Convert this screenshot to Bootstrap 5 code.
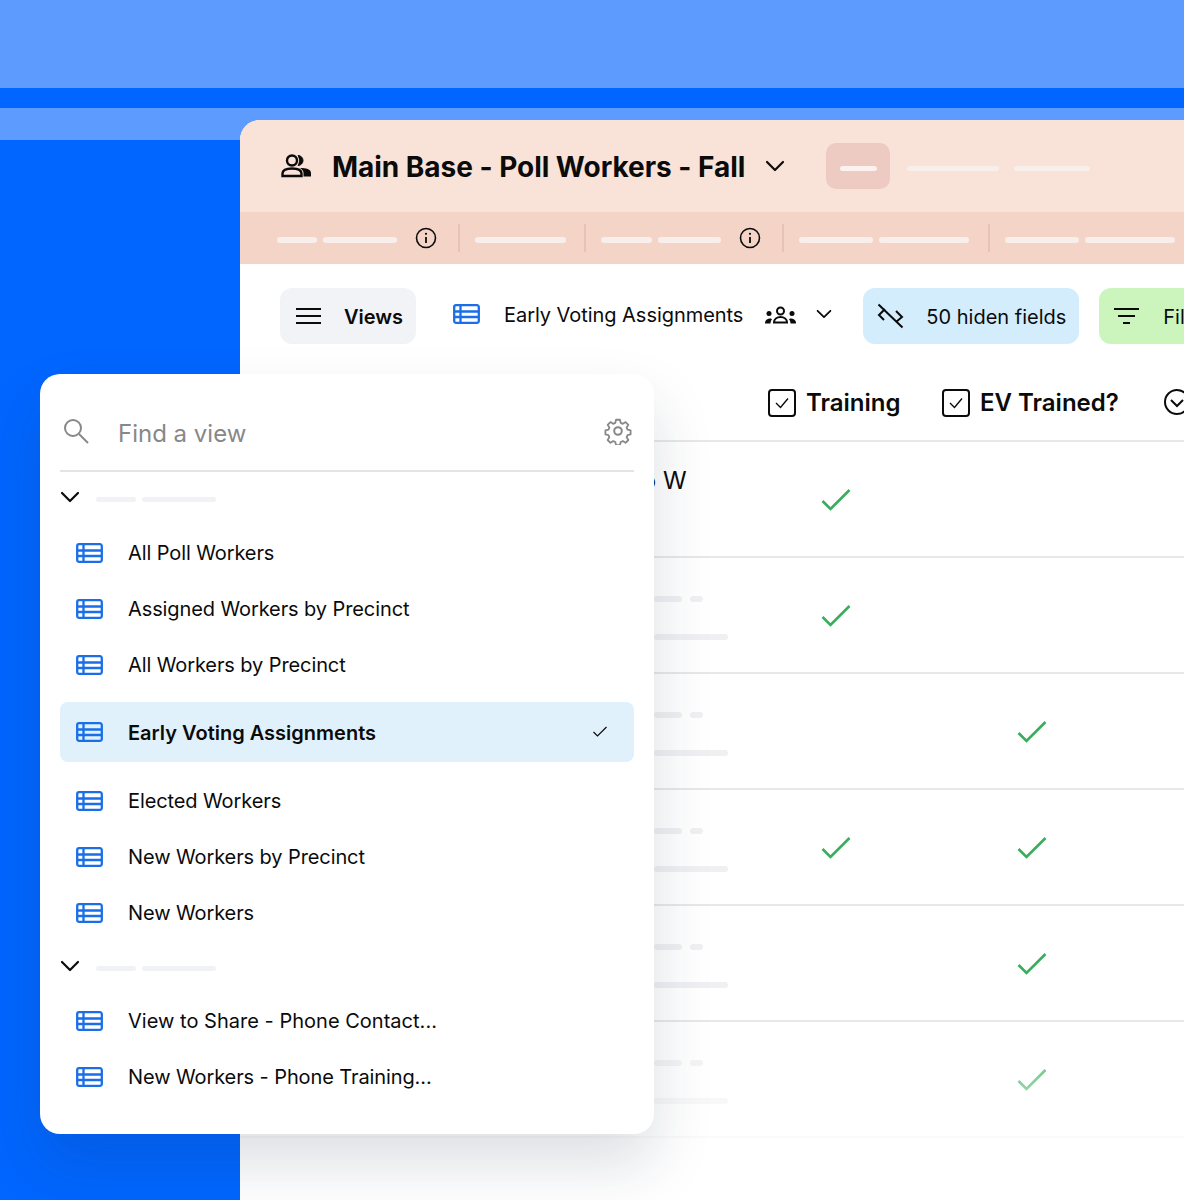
<!DOCTYPE html>
<html lang="en">
<head>
<meta charset="utf-8">
<title>Views</title>
<link rel="stylesheet" href="https://cdn.jsdelivr.net/npm/bootstrap@5.3.0/dist/css/bootstrap.min.css">
<style>
html,body{margin:0;background:#0066ff;}
body{font-family:Inter,"Noto Sans",sans-serif;color:#0b0b0b;}
svg{flex:none;}
.stage{position:relative;width:1184px;height:1200px;overflow:hidden;background:#0066ff;}
.stripe-a{height:88px;background:#5e9bff;}
.stripe-b{height:32px;margin-top:20px;background:#5e9bff;}
.win{position:absolute;left:240px;top:120px;width:1200px;height:1080px;background:#fff;border-top-left-radius:20px;overflow:hidden;}
.win-head{height:92px;background:#f9e3d8;padding-left:41px;}
.win-title{font-size:28px;font-weight:700;line-height:1;margin:0 0 0 20px;white-space:nowrap;letter-spacing:-.03px;position:relative;top:1px;}
.head-chev{margin-left:20px;}
.head-pill{width:64px;height:46px;background:#edcbc2;border-radius:10px;margin-left:41px;}
.sk{display:block;height:6px;border-radius:3px;background:#f8efec;flex:none;}
.sk-h{height:5px;position:relative;top:2px;}
.win-sub{height:52px;background:#f4d4c7;padding-left:37px;}
.win-sub .sk{position:relative;top:2px;}
.sub-sep{width:2px;height:28px;background:#e6c3b6;flex:none;}
.win-tools{padding:24px 0 0 40px;height:56px;box-sizing:content-box;}
.chip{height:56px;border-radius:12px;flex:none;white-space:nowrap;font-size:20px;}
.chip span{position:relative;top:1px;}
.chip-views{width:136px;background:#f1f3f7;padding-left:16px;font-weight:600;}
.chip-views span{margin-left:23px;}
.chip-hide{width:216px;background:#d3edfc;padding-left:14px;margin-left:31px;}
.chip-hide span{margin-left:22px;}
.chip-filter{width:200px;background:#ccf5be;padding-left:15px;margin-left:20px;}
.chip-filter span{margin-left:24px;}
.view-name{font-size:20px;margin-left:24px;line-height:1;white-space:nowrap;position:relative;top:-1px;letter-spacing:-.05px;}
.col-heads{height:98px;padding-top:44px;border-bottom:2px solid #e8e8e8;padding-left:528px;box-sizing:border-box;font-size:24px;font-weight:600;line-height:30px;white-space:nowrap;}
.col-h1{width:174px;flex:none;gap:10px;}
.col-h2{width:221px;flex:none;gap:10px;}
.t-row{height:116px;border-bottom:2px solid #e8e8e8;display:grid;grid-template-columns:498px 196px 196px;}
.t-name{padding-top:24px;padding-left:364px;font-size:24px;line-height:30px;white-space:nowrap;grid-column:1;grid-row:1;}
.t-skel{padding-top:38px;padding-left:414px;grid-column:1;grid-row:1;}
.t-skel .sk{background:#f0f0f3;height:6px;}
.t-c{display:flex;align-items:center;justify-content:center;padding-top:2px;}
.t-cell1{grid-column:2;grid-row:1;}
.t-cell2{grid-column:3;grid-row:1;}
.fade-bottom{position:absolute;left:0;right:0;top:900px;height:140px;background:linear-gradient(to bottom,rgba(255,255,255,0),rgba(255,255,255,.92));pointer-events:none;}
.pop{position:absolute;left:40px;top:374px;width:614px;height:760px;background:#fff;border-radius:20px;padding:0 20px;box-shadow:0 30px 60px rgba(30,40,70,.15);}
.pop-search{height:98px;border-bottom:2px solid #e4e4e4;padding:18px 2px 0 3px;}
.pop-search span{font-size:24px;color:#888;margin-left:29px;position:relative;top:3px;}
.pop-group{height:53px;padding-bottom:3px;}
.pop-group2{height:52px;padding-bottom:2px;}
.pop-group .sk{background:#f1f2f5;height:5px;position:relative;top:2px;}
.pop-group svg{margin-right:16px;}
.pop-item{height:56px;padding-left:16px;font-size:20px;white-space:nowrap;letter-spacing:-.1px;}
.pop-item span{margin-left:25px;}
.pop-wide{letter-spacing:.02px;}
.pop-active{height:60px;margin:9px 0 11px;background:#e0f1fc;border-radius:8px;font-weight:600;padding-right:26px;letter-spacing:0;}
.pop-active span{position:relative;top:1px;}
</style>
</head>
<body>
<svg width="0" height="0" class="d-block" aria-hidden="true">
<defs>
<symbol id="tbl" viewBox="0 0 27 20"><path fill="none" stroke="#1a6fe8" stroke-width="2.300" d="M3 1.200h21a1.800 1.800 0 0 1 1.800 1.800v14a1.800 1.800 0 0 1-1.800 1.800H3A1.800 1.800 0 0 1 1.200 17V3A1.800 1.800 0 0 1 3 1.200zM1 7.500h25M1 13h25M7.500 1v18"/></symbol>
<symbol id="chev" viewBox="0 0 20 12"><path fill="none" stroke="#0b0b0b" stroke-width="2.200" stroke-linecap="round" stroke-linejoin="round" d="M2 2l8 8 8-8"/></symbol>
<symbol id="chk" viewBox="0 0 30 24"><path fill="none" stroke="#38ae5c" stroke-width="2.600" d="M1.500 13l8 8L28.500 2"/></symbol>
<symbol id="box" viewBox="0 0 28 28"><rect x="1" y="1" width="26" height="26" rx="3" fill="none" stroke="#0b0b0b" stroke-width="2"/><path fill="none" stroke="#0b0b0b" stroke-width="1.400" d="M8 14l4.500 4.500L20 9.500"/></symbol>
<symbol id="info" viewBox="0 0 22 22"><circle cx="11" cy="11" r="9.500" fill="none" stroke="#0b0b0b" stroke-width="1.600"/><path d="M11 10v6" stroke="#0b0b0b" stroke-width="1.800"/><circle cx="11" cy="6.800" r="1.100" fill="#0b0b0b"/></symbol>
</defs>
</svg>
<main class="stage">
  <div class="stripe-a"></div>
  <div class="stripe-b"></div>

  <section class="win">
    <header class="win-head d-flex align-items-center">
      <svg width="31" height="24" viewBox="0 0 31 24"><circle cx="11" cy="6.500" r="5" fill="none" stroke="#0b0b0b" stroke-width="2.400"/><path d="M17 1.500a5 5 0 0 1 0 10c2-3 2-7 0-10z" fill="#0b0b0b" stroke="#0b0b0b"/><path fill="none" stroke="#0b0b0b" stroke-width="2.400" d="M1.500 22v-2.500c0-3 3-5 9.500-5s9.500 2 9.500 5V22z"/><path fill="#0b0b0b" d="M19 14c6 0 11 1 11 5v3.500h-7.500V19c0-2-1.500-4-3.500-5z"/></svg>
      <h1 class="win-title">Main Base - Poll Workers - Fall</h1>
      <svg class="head-chev" width="20" height="12"><use href="#chev"/></svg>
      <div class="head-pill d-flex align-items-center justify-content-center"><i class="sk sk-h" style="width:37px;background:#fbf1ee"></i></div>
      <i class="sk sk-h" style="width:92px;margin-left:17px"></i>
      <i class="sk sk-h" style="width:76px;margin-left:15px"></i>
    </header>
    <div class="win-sub d-flex align-items-center">
      <i class="sk" style="width:40px"></i><i class="sk" style="width:74px;margin-left:6px"></i>
      <svg width="22" height="22" style="margin-left:18px"><use href="#info"/></svg>
      <i class="sub-sep" style="margin-left:21px"></i>
      <i class="sk" style="width:91px;margin-left:15px"></i>
      <i class="sub-sep" style="margin-left:18px"></i>
      <i class="sk" style="width:51px;margin-left:15px"></i><i class="sk" style="width:63px;margin-left:6px"></i>
      <svg width="22" height="22" style="margin-left:18px"><use href="#info"/></svg>
      <i class="sub-sep" style="margin-left:21px"></i>
      <i class="sk" style="width:74px;margin-left:15px"></i><i class="sk" style="width:90px;margin-left:6px"></i>
      <i class="sub-sep" style="margin-left:19px"></i>
      <i class="sk" style="width:74px;margin-left:15px"></i><i class="sk" style="width:90px;margin-left:6px"></i>
    </div>
    <div class="win-tools d-flex align-items-center">
      <div class="chip chip-views d-flex align-items-center">
        <svg width="25" height="18" viewBox="0 0 25 18"><path stroke="#0b0b0b" stroke-width="2" d="M0 2h25M0 9h25M0 16h25"/></svg><span>Views</span>
      </div>
      <svg width="27" height="20" style="margin-left:37px;position:relative;top:-2px"><use href="#tbl"/></svg>
      <span class="view-name">Early Voting Assignments</span>
      <svg width="33" height="18" viewBox="0 0 33 18" style="margin-left:21px;position:relative;top:-1px"><circle cx="16.500" cy="5" r="3.500" fill="none" stroke="#0b0b0b" stroke-width="2"/><path fill="none" stroke="#0b0b0b" stroke-width="2" d="M10 16.500c0-3.500 3-5.500 6.500-5.500s6.500 2 6.500 5.500z"/><circle cx="5" cy="7.500" r="2.500" fill="#0b0b0b"/><circle cx="28" cy="7.500" r="2.500" fill="#0b0b0b"/><path fill="#0b0b0b" d="M1 17.500c0-3.500 2-5 6-5l1 1c-1 1-1.500 2.500-1.500 4zM32 17.500c0-3.500-2-5-6-5l-1 1c1 1 1.500 2.500 1.500 4z"/></svg>
      <svg width="16" height="10" viewBox="0 0 20 12" style="margin-left:19px;position:relative;top:-2px"><use href="#chev"/></svg>
      <div class="chip chip-hide d-flex align-items-center">
        <svg width="27" height="26" viewBox="0 0 27 26"><path fill="none" stroke="#0b0b0b" stroke-width="2" d="M1.500 1.500l24 23M8 6l-6 6 5 5M19 8l6 6-6 5"/></svg><span>50 hiden fields</span>
      </div>
      <div class="chip chip-filter d-flex align-items-center">
        <svg width="25" height="18" viewBox="0 0 25 18"><path stroke="#0b0b0b" stroke-width="2" d="M0 2h25M4 9h17M9 16h7"/></svg><span>Filter</span>
      </div>
    </div>
    <div class="col-heads d-flex align-items-start">
      <div class="col-h1 d-flex align-items-center"><svg width="28" height="28"><use href="#box"/></svg>Training</div>
      <div class="col-h2 d-flex align-items-center"><svg width="28" height="28"><use href="#box"/></svg>EV Trained?</div>
      <svg width="28" height="28" viewBox="0 0 28 28"><circle cx="14" cy="14" r="12" fill="none" stroke="#0b0b0b" stroke-width="2"/><path fill="none" stroke="#0b0b0b" stroke-width="2" d="M8 12l6 6 6-6"/></svg>
    </div>
    <div class="t-row"><div class="t-name">Who W</div><div class="t-c t-cell1"><svg width="30" height="24"><use href="#chk"/></svg></div></div>
    <div class="t-row"><div class="t-skel"><div class="d-flex gap-2"><i class="sk" style="width:28px"></i><i class="sk" style="width:13px"></i></div><i class="sk" style="width:74px;margin-top:32px"></i></div><div class="t-c t-cell1"><svg width="30" height="24"><use href="#chk"/></svg></div></div>
    <div class="t-row"><div class="t-skel"><div class="d-flex gap-2"><i class="sk" style="width:28px"></i><i class="sk" style="width:13px"></i></div><i class="sk" style="width:74px;margin-top:32px"></i></div><div class="t-c t-cell2"><svg width="30" height="24"><use href="#chk"/></svg></div></div>
    <div class="t-row"><div class="t-skel"><div class="d-flex gap-2"><i class="sk" style="width:28px"></i><i class="sk" style="width:13px"></i></div><i class="sk" style="width:74px;margin-top:32px"></i></div><div class="t-c t-cell1"><svg width="30" height="24"><use href="#chk"/></svg></div><div class="t-c t-cell2"><svg width="30" height="24"><use href="#chk"/></svg></div></div>
    <div class="t-row"><div class="t-skel"><div class="d-flex gap-2"><i class="sk" style="width:28px"></i><i class="sk" style="width:13px"></i></div><i class="sk" style="width:74px;margin-top:32px"></i></div><div class="t-c t-cell2"><svg width="30" height="24"><use href="#chk"/></svg></div></div>
    <div class="t-row"><div class="t-skel"><div class="d-flex gap-2"><i class="sk" style="width:28px"></i><i class="sk" style="width:13px"></i></div><i class="sk" style="width:74px;margin-top:32px"></i></div><div class="t-c t-cell2"><svg width="30" height="24"><use href="#chk"/></svg></div></div>
    <div class="fade-bottom"></div>
  </section>

  <aside class="pop">
    <div class="pop-search d-flex align-items-center">
      <svg width="26" height="26" viewBox="0 0 26 26"><circle cx="10" cy="10" r="8" fill="none" stroke="#888" stroke-width="2"/><path stroke="#888" stroke-width="2" d="M16 16l9 9"/></svg>
      <span class="flex-grow-1">Find a view</span>
      <svg width="28" height="28" viewBox="0 0 28 28"><path fill="none" stroke="#888" stroke-width="2" stroke-linejoin="round" d="M11.800 1.500h4.400l.8 3.500 2.400 1 3-1.900 3.100 3.100-1.900 3 1 2.400 3.400.8v4.400l-3.400.8-1 2.400 1.900 3-3.100 3.100-3-1.900-2.400 1-.8 3.400h-4.400l-.8-3.400-2.400-1-3 1.900-3.100-3.100 1.900-3-1-2.400-3.400-.8v-4.400l3.400-.8 1-2.400-1.900-3 3.100-3.100 3 1.900 2.400-1z" transform="translate(1.400 1.400) scale(.9)"/><circle cx="14" cy="14" r="3.800" fill="none" stroke="#888" stroke-width="2"/></svg>
    </div>
    <div class="pop-group d-flex align-items-center"><svg width="20" height="12"><use href="#chev"/></svg><i class="sk" style="width:40px"></i><i class="sk" style="width:74px;margin-left:6px"></i></div>
    <div class="pop-item d-flex align-items-center"><svg width="27" height="20"><use href="#tbl"/></svg><span>All Poll Workers</span></div>
    <div class="pop-item d-flex align-items-center"><svg width="27" height="20"><use href="#tbl"/></svg><span>Assigned Workers by Precinct</span></div>
    <div class="pop-item d-flex align-items-center"><svg width="27" height="20"><use href="#tbl"/></svg><span>All Workers by Precinct</span></div>
    <div class="pop-item pop-active d-flex align-items-center"><svg width="27" height="20"><use href="#tbl"/></svg><span class="flex-grow-1">Early Voting Assignments</span><svg width="16" height="12" viewBox="0 0 16 12"><path fill="none" stroke="#0b0b0b" stroke-width="1.200" d="M1.500 6l4 4 9-9"/></svg></div>
    <div class="pop-item d-flex align-items-center"><svg width="27" height="20"><use href="#tbl"/></svg><span>Elected Workers</span></div>
    <div class="pop-item d-flex align-items-center"><svg width="27" height="20"><use href="#tbl"/></svg><span>New Workers by Precinct</span></div>
    <div class="pop-item d-flex align-items-center"><svg width="27" height="20"><use href="#tbl"/></svg><span>New Workers</span></div>
    <div class="pop-group pop-group2 d-flex align-items-center"><svg width="20" height="12"><use href="#chev"/></svg><i class="sk" style="width:40px"></i><i class="sk" style="width:74px;margin-left:6px"></i></div>
    <div class="pop-item pop-wide d-flex align-items-center"><svg width="27" height="20"><use href="#tbl"/></svg><span>View to Share - Phone Contact...</span></div>
    <div class="pop-item d-flex align-items-center"><svg width="27" height="20"><use href="#tbl"/></svg><span>New Workers - Phone Training...</span></div>
  </aside>
</main>
<script src="https://cdn.jsdelivr.net/npm/bootstrap@5.3.0/dist/js/bootstrap.bundle.min.js"></script>
</body>
</html>
